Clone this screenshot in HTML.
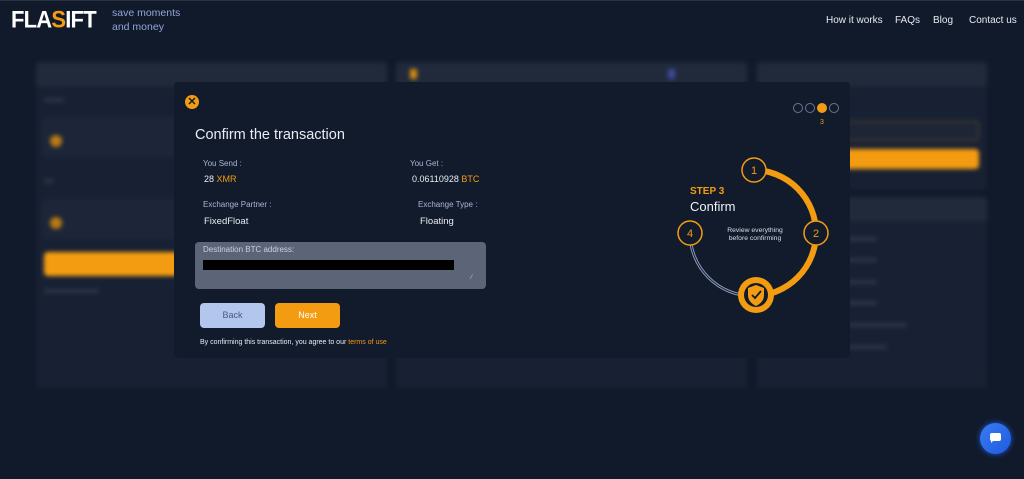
<!DOCTYPE html>
<html><head><meta charset="utf-8"><style>
*{margin:0;padding:0;box-sizing:border-box}
body{width:1024px;height:479px;background:#111a2b;font-family:"Liberation Sans",sans-serif;overflow:hidden;position:relative;color:#fff}
.abs{position:absolute}
.bg{filter:blur(2px)}
.panel{position:absolute;background:#182133;border-radius:4px}
.ph{position:absolute;left:0;right:0;top:0;height:24px;background:#202a3b;border-radius:4px 4px 0 0}
.bar{position:absolute;background:#2c3547;border-radius:2px;height:4px}
.nav a{color:#e6e9f0;font-size:10px;position:absolute;top:15px}
</style></head><body>
<div class="abs" style="left:0;top:0;width:1024px;height:1px;background:#2a3140"></div>
<div class="abs" style="left:11px;top:7px;font-weight:bold;font-size:22px;letter-spacing:-0.8px;color:#fff;transform:scaleY(1.1)">FLA<span style="color:#f39c12">S</span>IFT</div>
<div class="abs" style="left:112px;top:6px;font-size:10.5px;line-height:14px;color:#8ea7d6">save moments<br>and money</div>
<div class="nav"><a style="left:826px">How it works</a><a style="left:895px">FAQs</a><a style="left:933px">Blog</a><a style="left:969px">Contact us</a></div>

<div class="bg">
<div class="panel" style="left:36px;top:62px;width:351px;height:326px"><div class="ph"></div>
<div class="bar" style="left:8px;top:36px;width:20px"></div>
<div class="abs" style="left:6px;top:55px;width:340px;height:40px;background:#1c2638;border-radius:4px"></div>
<div class="abs" style="left:14px;top:73px;width:12px;height:12px;border-radius:50%;background:#b87a14"></div>
<div class="bar" style="left:8px;top:117px;width:10px"></div>
<div class="abs" style="left:6px;top:137px;width:340px;height:40px;background:#1c2638;border-radius:4px"></div>
<div class="abs" style="left:14px;top:155px;width:12px;height:12px;border-radius:50%;background:#b87a14"></div>
<div class="abs" style="left:8px;top:190px;width:340px;height:24px;background:#f39c12;border-radius:4px"></div>
<div class="bar" style="left:8px;top:227px;width:55px"></div>
</div>
<div class="panel" style="left:396px;top:62px;width:351px;height:326px"><div class="ph"></div>
<div class="abs" style="left:14px;top:7px;width:7px;height:10px;background:#d48c12"></div>
<div class="abs" style="left:272px;top:7px;width:7px;height:10px;background:#3b4a9a"></div>
</div>
<div class="panel" style="left:757px;top:62px;width:230px;height:128px"><div class="ph"></div>
<div class="abs" style="left:8px;top:59px;width:214px;height:20px;border:1px solid #5a4a2a;border-radius:4px;background:#1e2535"></div>
<div class="abs" style="left:8px;top:87px;width:214px;height:20px;background:#f39c12;border-radius:4px"></div>
</div>
<div class="panel" style="left:757px;top:197px;width:230px;height:191px"><div class="ph"></div>
<div class="bar" style="left:90px;top:40px;width:30px"></div><div class="bar" style="left:90px;top:61px;width:30px"></div><div class="bar" style="left:90px;top:83px;width:30px"></div><div class="bar" style="left:90px;top:104px;width:30px"></div><div class="bar" style="left:90px;top:126px;width:60px"></div><div class="bar" style="left:90px;top:148px;width:40px"></div>
</div>
</div>

<div class="abs" style="left:174px;top:82px;width:676px;height:276px;background:#121b2c;border-radius:4px"></div>
<div class="abs" style="left:185px;top:95px;width:14px;height:14px;border-radius:50%;background:#f39c12;color:#121b2c;font-size:11px;line-height:14px;text-align:center;font-weight:bold">✕</div>
<div class="abs" style="left:195px;top:127px;font-size:14.5px;color:#e8ecf3">Confirm the transaction</div>
<div class="abs" style="left:203px;top:159px;font-size:8px;color:#a9b6d4">You Send :</div>
<div class="abs" style="left:204px;top:174px;font-size:9px;color:#e8ecf3">28 <span style="color:#f39c12">XMR</span></div>
<div class="abs" style="left:410px;top:159px;font-size:8px;color:#a9b6d4">You Get :</div>
<div class="abs" style="left:412px;top:174px;font-size:9px;color:#e8ecf3">0.06110928 <span style="color:#f39c12">BTC</span></div>
<div class="abs" style="left:203px;top:200px;font-size:8px;color:#a9b6d4">Exchange Partner :</div>
<div class="abs" style="left:204px;top:216px;font-size:9.5px;color:#e8ecf3">FixedFloat</div>
<div class="abs" style="left:418px;top:200px;font-size:8px;color:#a9b6d4">Exchange Type :</div>
<div class="abs" style="left:420px;top:216px;font-size:9.5px;color:#e8ecf3">Floating</div>
<div class="abs" style="left:195px;top:242px;width:291px;height:47px;background:#5c6577;border-radius:4px"></div>
<div class="abs" style="left:203px;top:245px;font-size:8px;color:#c6d0e6">Destination BTC address:</div>
<div class="abs" style="left:203px;top:260px;width:251px;height:10px;background:#000"></div>
<div class="abs" style="left:471px;top:275px;font-size:6px;color:#c6d0e6">⁄</div>
<div class="abs" style="left:200px;top:303px;width:65px;height:25px;background:#b3c6ee;border-radius:4px;color:#4a5a7a;font-size:9px;line-height:25px;text-align:center">Back</div>
<div class="abs" style="left:275px;top:303px;width:65px;height:25px;background:#f39c12;border-radius:4px;color:#fff;font-size:9px;line-height:25px;text-align:center">Next</div>
<div class="abs" style="left:200px;top:339px;font-size:7px;color:#e8ecf3">By confirming this transaction, you agree to our <span style="color:#f39c12">terms of use</span></div>

<svg class="abs" style="left:0;top:0" width="1024" height="479">
<circle cx="798" cy="108" r="4.5" fill="none" stroke="#6a7590"/>
<circle cx="810" cy="108" r="4.5" fill="none" stroke="#6a7590"/>
<circle cx="822" cy="108" r="5" fill="#f39c12"/>
<circle cx="834" cy="108" r="4.5" fill="none" stroke="#6a7590"/>
<text x="822" y="124" font-size="7" fill="#f39c12" text-anchor="middle" font-family="Liberation Sans">3</text>
<path d="M690 233 A63 63 0 0 0 753 296" fill="none" stroke="#8a97b8" stroke-width="3"/>
<path d="M690 233 A63 63 0 0 0 753 296" fill="none" stroke="#121b2c" stroke-width="1"/>
<path d="M753 170 A63 63 0 0 1 753 296" fill="none" stroke="#f39c12" stroke-width="6"/>
<circle cx="754" cy="170" r="12" fill="#121b2c" stroke="#f39c12" stroke-width="1.5"/>
<text x="754" y="174" font-size="11" fill="#f39c12" text-anchor="middle" font-family="Liberation Sans">1</text>
<circle cx="816" cy="233" r="12" fill="#121b2c" stroke="#f39c12" stroke-width="1.5"/>
<text x="816" y="237" font-size="11" fill="#f39c12" text-anchor="middle" font-family="Liberation Sans">2</text>
<circle cx="690" cy="233" r="12" fill="#121b2c" stroke="#f39c12" stroke-width="1.5"/>
<text x="690" y="237" font-size="11" fill="#f39c12" text-anchor="middle" font-family="Liberation Sans">4</text>
<circle cx="756" cy="295" r="18" fill="#f39c12"/>
<circle cx="756" cy="295" r="12" fill="#121b2c"/>
<path d="M756 285 L764 288 L764 295 Q764 302 756 306 Q748 302 748 295 L748 288 Z" fill="#f39c12"/>
<path d="M752 295 L755 298 L761 291" fill="none" stroke="#121b2c" stroke-width="1.8"/>
<text x="690" y="194" font-size="10" font-weight="bold" fill="#f39c12" font-family="Liberation Sans">STEP 3</text>
<text x="690" y="211" font-size="13" fill="#eef1f6" font-family="Liberation Sans">Confirm</text>
<text x="755" y="232" font-size="6.8" fill="#d8dde8" text-anchor="middle" font-family="Liberation Sans">Review everything</text>
<text x="755" y="240" font-size="6.8" fill="#d8dde8" text-anchor="middle" font-family="Liberation Sans">before confirming</text>
</svg>

<div class="abs" style="left:980px;top:423px;width:31px;height:31px;border-radius:50%;background:linear-gradient(135deg,#3a7bf0,#1e5be0);box-shadow:0 0 6px #1e5be0"></div>
<div class="abs" style="left:990px;top:433px;width:11px;height:8px;background:#fff;border-radius:2px"></div>
<div class="abs" style="left:991px;top:440px;width:0;height:0;border-left:3px solid #fff;border-bottom:3px solid transparent"></div>
</body></html>
